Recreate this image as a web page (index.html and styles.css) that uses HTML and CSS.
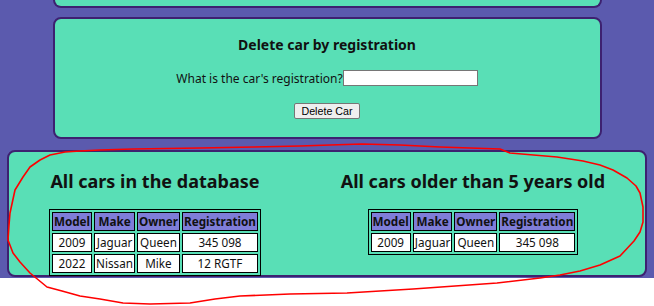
FILE: index.html
```html
<!DOCTYPE html>
<html lang="en">
<head>
    <meta charset="UTF-8" />
    <meta name="viewport" content="width=device-width, initial-scale=1.0"/>
    <title>Car Register</title>
    <link rel="stylesheet" href="styles.css">
</head>
<body>
    <div class="page">
        <div class="card card-top"></div>

        <div class="card card-delete">
            <h3>Delete car by registration</h3>
            <div class="field">
                <label for="reg">What is the car's registration?</label><input id="reg" type="text" />
            </div>
            <button>Delete Car</button>
        </div>

        <div class="card card-lists">
            <div class="list">
                <h2>All cars in the database</h2>
                <table>
                    <tr><th>Model</th><th>Make</th><th>Owner</th><th>Registration</th></tr>
                    <tr><td>2009</td><td>Jaguar</td><td>Queen</td><td>345 098</td></tr>
                    <tr><td>2022</td><td>Nissan</td><td>Mike</td><td>12 RGTF</td></tr>
                </table>
            </div>
            <div class="list">
                <h2>All cars older than 5 years old</h2>
                <table>
                    <tr><th>Model</th><th>Make</th><th>Owner</th><th>Registration</th></tr>
                    <tr><td>2009</td><td>Jaguar</td><td>Queen</td><td>345 098</td></tr>
                </table>
            </div>
        </div>
    </div>

    <!-- red hand-drawn circle over the lists -->
    <svg class="scribble" width="654" height="306" viewBox="0 0 654 306">
        <polyline fill="none" stroke="#ff0000" stroke-width="1.6" stroke-linejoin="round" stroke-linecap="round"
            points="100,150 133,149 200,148 254,147 300,146 330,145 362,144 400,145 440,147 500,149 510,153 557,157 583,161 600,165 613,170 627,178 636,186 640,193 643,207 643,222 640,232 634,241 620,256 600,265 580,271 560,275 540,278 497,283 455,286 413,289 347,293 290,294 240,296 215,299 190,303 150,304 123,303 100,299 80,296 62,291 47,287 30,273 20,262 13,253 8,240 9,225 10,213 15,190 23,177 30,167 40,160 50,155 65,152 80,151 100,150" />
    </svg>
</body>
</html>
```

FILE: styles.css
```css
body {
    margin: 0;
    background-color: #ffffff;
    font-family: "Noto Sans", "Open Sans", sans-serif;
    font-size: 12px;
    color: #111;
}

.page {
    background-color: #5b5aae;
    padding: 0 7px 1px;
}

.card {
    background-color: #59dfb6;
    border: 2px solid #3d2170;
    border-radius: 8px;
    box-sizing: border-box;
}

.card-top {
    width: 549px;
    height: 8px;
    margin: 0 auto;
    border-top: none;
    border-radius: 0 0 8px 8px;
}

.card-delete {
    width: 549px;
    height: 122px;
    margin: 9px auto 11px;
    text-align: center;
}

h3 {
    margin: 16px 0 15px;
    font-size: 14px;
    line-height: 20px;
}

.field {
    display: flex;
    justify-content: center;
    align-items: center;
    height: 16px;
}

label {
    font-size: 12px;
}

input[type=text] {
    width: 135px;
    height: 16px;
    box-sizing: border-box;
    margin: 0;
    border: 1px solid #767676;
    padding: 0 2px;
    font-size: 11px;
}

button {
    margin-top: 17px;
    height: 16px;
    padding: 0 6px;
    font-family: "Liberation Sans", Arial, sans-serif;
    font-size: 10.7px;
    line-height: 12px;
    background-color: #efefef;
    border: 1px solid #767676;
    border-radius: 2px;
    color: #000;
}

.card-lists {
    height: 127px;
    display: flex;
    justify-content: space-around;
    align-items: flex-start;
}

.list {
    display: flex;
    flex-direction: column;
    align-items: center;
}

h2 {
    margin: 16px 0 15px;
    font-size: 18px;
    line-height: 26px;
    white-space: nowrap;
}

table {
    border: 1px solid #000;
    border-spacing: 2px;
    background-color: transparent;
}

th, td {
    border: 1px solid #000;
    padding: 1px;
    text-align: center;
    font-size: 11.7px;
    line-height: 15px;
}

th {
    background-color: #7f7dd8;
}

td {
    background-color: #ffffff;
}

.scribble {
    position: absolute;
    left: 0;
    top: 0;
    pointer-events: none;
}
```
